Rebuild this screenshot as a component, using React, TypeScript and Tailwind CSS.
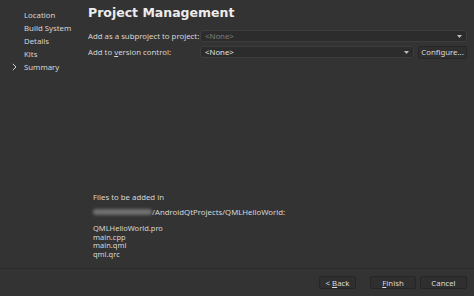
import React from "react";

const steps = ["Location", "Build System", "Details", "Kits", "Summary"];
const files = ["QMLHelloWorld.pro", "main.cpp", "main.qml", "qml.qrc"];

const Arrow = () => (
  <svg width="5" height="3" viewBox="0 0 5 3" className="shrink-0">
    <path d="M0 0 H5 L2.5 3 Z" fill="#bdbdbd" />
  </svg>
);

const Combo: React.FC<{ text: string; disabled?: boolean; className?: string }> = ({ text, disabled, className }) => (
  <div className={`h-[12px] flex items-center justify-between pl-[4px] pr-[4px] bg-[#2c2c2c] border border-[#3d3d3d] rounded-[2px] ${className ?? ""}`}>
    <span className={disabled ? "text-[#7d7d7d]" : "text-[#e0e0e0]"}>{text}</span>
    <Arrow />
  </div>
);

const Btn: React.FC<{ children: React.ReactNode; className?: string }> = ({ children, className }) => (
  <div className={`h-[13px] flex items-center justify-center bg-[#2f2f2f] border border-[#262626] rounded-[2px] text-[#dadada] ${className ?? ""}`}>
    {children}
  </div>
);

export default function App() {
  return (
    <div className="w-[474px] h-[296px] bg-[#333333] flex flex-col text-[7.8px] leading-[10px] text-[#d6d6d6] overflow-hidden" style={{ fontFamily: '"Noto Sans", sans-serif' }}>
      <div className="flex flex-1">
        <div className="w-[88px] pt-[10px] flex flex-col gap-[3px]">
          {steps.map((s, i) => (
            <div key={s} className="flex items-center h-[10px]">
              <span className="w-[24px] flex justify-end pr-[7px]">
                {i === steps.length - 1 && (
                  <svg width="5" height="8" viewBox="0 0 5 8">
                    <path d="M0.8 0.8 L4 4 L0.8 7.2" fill="none" stroke="#cfcfcf" strokeWidth="1" />
                  </svg>
                )}
              </span>
              <span>{s}</span>
            </div>
          ))}
        </div>
        <div className="flex-1 pr-[7px] flex flex-col">
          <div className="pt-[6px] h-[25px] text-[12.5px] leading-[14px] font-bold text-[#ececec]" style={{ fontFamily: '"DejaVu Sans", sans-serif' }}>Project Management</div>
          <div className="flex items-center h-[12px] mt-[5px]">
            <span className="w-[112px] shrink-0 whitespace-nowrap">Add as a subproject to project:</span>
            <Combo text="<None>" disabled className="flex-1" />
          </div>
          <div className="flex items-center h-[12px] mt-[4px]">
            <span className="w-[112px] shrink-0 whitespace-nowrap">
              Add to <span className="underline">v</span>ersion control:
            </span>
            <Combo text="<None>" className="flex-1" />
            <Btn className="ml-[4px] w-[49px]">Configure...</Btn>
          </div>
          <div className="mt-[134px] pl-[5px] flex flex-col">
            <div className="h-[10px]">Files to be added in</div>
            <div className="h-[10px] mt-[5px] flex items-center">
              <span className="inline-block w-[59px] h-[6px] bg-[#707070] blur-[1.5px] rounded-sm" />
              <span>/AndroidQtProjects/QMLHelloWorld:</span>
            </div>
            <div className="mt-[7px] flex flex-col text-[7.5px]">
              {files.map((f) => (
                <div key={f} className="h-[8.5px] leading-[8.5px]">{f}</div>
              ))}
            </div>
          </div>
        </div>
      </div>
      <div className="h-[28px] border-t border-[#2a2a2a] flex items-center justify-end pr-[7px]">
        <Btn className="w-[37px]">
          <span>&lt; <span className="underline">B</span>ack</span>
        </Btn>
        <Btn className="w-[46px] ml-[14px]">
          <span><span className="underline">F</span>inish</span>
        </Btn>
        <Btn className="w-[47px] ml-[4px]">Cancel</Btn>
      </div>
    </div>
  );
}
